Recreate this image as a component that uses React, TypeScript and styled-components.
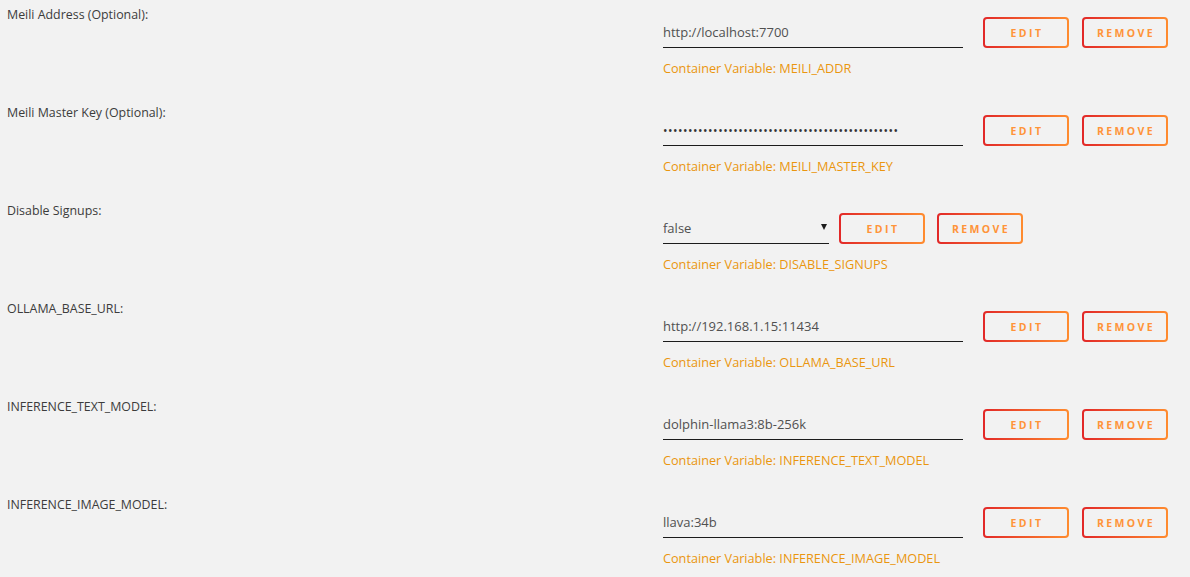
import styled, { createGlobalStyle } from "styled-components";

const Global = createGlobalStyle`
  html, body {
    margin: 0;
    padding: 0;
    background: #f2f2f2;
  }
  body {
    font-family: "Open Sans", "Liberation Sans", sans-serif;
  }
`;

const Page = styled.div`
  width: 1190px;
  height: 577px;
  overflow: hidden;
  padding-left: 7px;
  box-sizing: border-box;
  background: #f2f2f2;
`;

const Row = styled.div`
  display: flex;
  align-items: flex-start;
  height: 98px;
`;

const Label = styled.div`
  flex: 0 0 656px;
  margin-top: 7px;
  font-size: 12.4px;
  line-height: 16px;
  color: #3c3c3c;
`;

const Field = styled.div`
  display: flex;
  flex-direction: column;
  padding-top: 17px;
`;

const Controls = styled.div`
  display: flex;
  align-items: flex-start;
`;

const TextInput = styled.input`
  width: 300px;
  height: 31px;
  box-sizing: border-box;
  border: none;
  border-bottom: 1px solid #1c1c1c;
  background: transparent;
  padding: 0;
  font-family: "Open Sans", "Liberation Sans", sans-serif;
  font-size: 13px;
  color: #505050;
  outline: none;
  &[type="password"] {
    font-size: 12px;
    letter-spacing: 0.5px;
    color: #333;
  }
`;

const SelectWrap = styled.div`
  position: relative;
  width: 166px;
  &::after {
    content: "";
    position: absolute;
    right: 2px;
    top: 11px;
    border-left: 3px solid transparent;
    border-right: 3px solid transparent;
    border-top: 6px solid #1c1c1c;
    pointer-events: none;
  }
`;

const Select = styled.select`
  appearance: none;
  width: 166px;
  height: 31px;
  box-sizing: border-box;
  border: none;
  border-bottom: 1px solid #1c1c1c;
  border-radius: 0;
  background: transparent;
  padding: 0;
  font-family: "Open Sans", "Liberation Sans", sans-serif;
  font-size: 13px;
  color: #505050;
  outline: none;
`;

const Button = styled.button<{ $gap: number }>`
  margin-left: ${(p) => p.$gap}px;
  width: 86px;
  height: 31px;
  box-sizing: border-box;
  border: 2px solid transparent;
  border-radius: 4px;
  background:
    linear-gradient(#f2f2f2, #f2f2f2) padding-box,
    linear-gradient(90deg, #e22828 0%, #ff8c2f 100%) border-box;
  font-family: "Open Sans", "Liberation Sans", sans-serif;
  font-weight: 700;
  font-size: 10.5px;
  letter-spacing: 2.4px;
  text-transform: uppercase;
  color: #ff9439;
  cursor: pointer;
  padding: 0 0 0 2px;
`;

const Hint = styled.div`
  margin-top: 12px;
  font-size: 12.7px;
  line-height: 16px;
  color: #ea960f;
`;

type Variable = {
  label: string;
  name: string;
  value: string;
  kind: "text" | "password" | "select";
};

const vars: Variable[] = [
  { label: "Meili Address (Optional):", name: "MEILI_ADDR", value: "http://localhost:7700", kind: "text" },
  { label: "Meili Master Key (Optional):", name: "MEILI_MASTER_KEY", value: "x".repeat(47), kind: "password" },
  { label: "Disable Signups:", name: "DISABLE_SIGNUPS", value: "false", kind: "select" },
  { label: "OLLAMA_BASE_URL:", name: "OLLAMA_BASE_URL", value: "http://192.168.1.15:11434", kind: "text" },
  { label: "INFERENCE_TEXT_MODEL:", name: "INFERENCE_TEXT_MODEL", value: "dolphin-llama3:8b-256k", kind: "text" },
  { label: "INFERENCE_IMAGE_MODEL:", name: "INFERENCE_IMAGE_MODEL", value: "llava:34b", kind: "text" },
];

export default function App() {
  return (
    <Page>
      <Global />
      {vars.map((v) => {
        const isSelect = v.kind === "select";
        return (
          <Row key={v.name}>
            <Label>{v.label}</Label>
            <Field>
              <Controls>
                {isSelect ? (
                  <SelectWrap>
                    <Select defaultValue={v.value}>
                      <option value="false">false</option>
                      <option value="true">true</option>
                    </Select>
                  </SelectWrap>
                ) : (
                  <TextInput type={v.kind} defaultValue={v.value} readOnly />
                )}
                <Button $gap={isSelect ? 10 : 20}>Edit</Button>
                <Button $gap={isSelect ? 12 : 13}>Remove</Button>
              </Controls>
              <Hint>Container Variable: {v.name}</Hint>
            </Field>
          </Row>
        );
      })}
    </Page>
  );
}
